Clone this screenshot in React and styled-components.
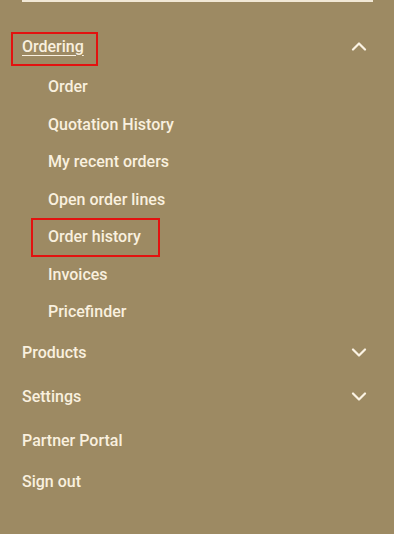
import React from "react";
import styled, { createGlobalStyle } from "styled-components";

const GlobalStyle = createGlobalStyle`
  html, body {
    margin: 0;
    padding: 0;
    background: #9d8a63;
  }
  body {
    font-family: Roboto, "Liberation Sans", sans-serif;
  }
`;

const subItems = [
  "Order",
  "Quotation History",
  "My recent orders",
  "Open order lines",
  "Order history",
  "Invoices",
  "Pricefinder",
];

const Chevron = ({ up }) => (
  <svg width="16" height="10" viewBox="0 0 16 10" fill="none">
    <path
      d={up ? "M2 8.5L8 2.5L14 8.5" : "M2 1.5L8 7.5L14 1.5"}
      stroke="#fbf3e4"
      strokeWidth="2.2"
      strokeLinecap="round"
      strokeLinejoin="round"
    />
  </svg>
);

const App = () => {
  return (
    <>
      <GlobalStyle />
      <Panel>
        <SearchEdge />
        <Nav>
          <TopRow>
            <TopLabel $underline>
              <Marked $l={11} $r={14} $t={5} $b={10}>Ordering</Marked>
            </TopLabel>
            <Chevron up />
          </TopRow>
          <SubList>
            {subItems.map((item) => (
              <SubRow key={item}>
                {item === "Order history" ? (
                  <Marked $l={17} $r={19} $t={9} $b={11}>{item}</Marked>
                ) : (
                  item
                )}
              </SubRow>
            ))}
          </SubList>
          <TopRow>
            <TopLabel>Products</TopLabel>
            <Chevron />
          </TopRow>
          <TopRow>
            <TopLabel>Settings</TopLabel>
            <Chevron />
          </TopRow>
          <TopRow>
            <TopLabel>Partner Portal</TopLabel>
          </TopRow>
          <TopRow $height={38}>
            <TopLabel>Sign out</TopLabel>
          </TopRow>
        </Nav>
      </Panel>
    </>
  );
};

const Panel = styled.div`
  width: 394px;
  height: 534px;
  background: #9d8a63;
  overflow: hidden;
  color: #f9f0df;
  font-weight: 500;
`;

const SearchEdge = styled.div`
  height: 2px;
  margin: 0 21px 0 22px;
  background: #f1e8d6;
`;

const Nav = styled.nav`
  display: flex;
  flex-direction: column;
  padding-top: 22px;
`;

const TopRow = styled.div`
  height: ${(p) => p.$height || 44}px;
  display: flex;
  align-items: center;
  justify-content: space-between;
  padding: 0 27px 0 22px;
  font-size: 16px;
`;

const TopLabel = styled.span`
  text-decoration: ${(p) => (p.$underline ? "underline" : "none")};
  text-underline-offset: 3px;
  text-decoration-thickness: 1px;
`;

const SubList = styled.div`
  display: flex;
  flex-direction: column;
`;

const SubRow = styled.div`
  height: 37.5px;
  display: flex;
  align-items: center;
  padding-left: 48px;
  font-size: 16px;
`;

const Marked = styled.span`
  position: relative;
  &::after {
    content: "";
    position: absolute;
    left: -${(p) => p.$l}px;
    right: -${(p) => p.$r}px;
    top: -${(p) => p.$t}px;
    bottom: -${(p) => p.$b}px;
    border: 2px solid #e3120f;
    pointer-events: none;
  }
`;

export default App;
